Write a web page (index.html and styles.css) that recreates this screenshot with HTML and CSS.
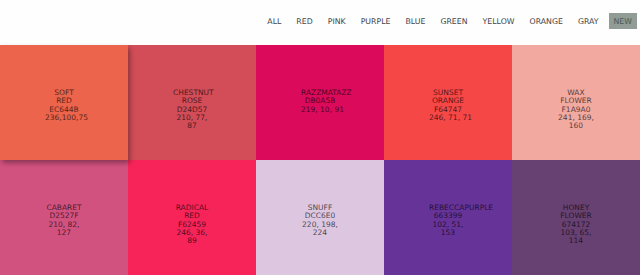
FILE: index.html
```html
<!DOCTYPE html>
<html lang="en">
<head>
    <meta charset="UTF-8">
    <meta name="viewport" content="width=device-width, initial-scale=1.0">
    <title>Flat Colors</title>
    <link rel="stylesheet" href="styles.css">
</head>
<body>
    <header class="topbar">
        <nav class="filters">
            <a href="#">All</a>
            <a href="#">Red</a>
            <a href="#">Pink</a>
            <a href="#">Purple</a>
            <a href="#">Blue</a>
            <a href="#">Green</a>
            <a href="#">Yellow</a>
            <a href="#">Orange</a>
            <a href="#">Gray</a>
            <a href="#" class="active">New</a>
        </nav>
    </header>

    <div class="swatches">
        <div class="swatch hovered" style="background-color: #EC644B;">
            <p>SOFT<br>RED<br>EC644B<br>236,100,75</p>
        </div>
        <div class="swatch" style="background-color: #D24D57;">
            <p>CHESTNUT<br>ROSE<br>D24D57<br>210, 77,<br>87</p>
        </div>
        <div class="swatch" style="background-color: #DB0A5B;">
            <p>RAZZMATAZZ<br>DB0A5B<br>219, 10, 91</p>
        </div>
        <div class="swatch" style="background-color: #F64747;">
            <p>SUNSET<br>ORANGE<br>F64747<br>246, 71, 71</p>
        </div>
        <div class="swatch" style="background-color: #F1A9A0;">
            <p>WAX<br>FLOWER<br>F1A9A0<br>241, 169,<br>160</p>
        </div>
        <div class="swatch" style="background-color: #D2527F;">
            <p>CABARET<br>D2527F<br>210, 82,<br>127</p>
        </div>
        <div class="swatch" style="background-color: #F62459;">
            <p>RADICAL<br>RED<br>F62459<br>246, 36,<br>89</p>
        </div>
        <div class="swatch" style="background-color: #DCC6E0;">
            <p>SNUFF<br>DCC6E0<br>220, 198,<br>224</p>
        </div>
        <div class="swatch" style="background-color: #663399;">
            <p>REBECCAPURPLE<br>663399<br>102, 51,<br>153</p>
        </div>
        <div class="swatch" style="background-color: #674172;">
            <p>HONEY<br>FLOWER<br>674172<br>103, 65,<br>114</p>
        </div>
    </div>
</body>
</html>
```

FILE: styles.css
```css
body {
    margin: 0;
    font-family: "DejaVu Sans", sans-serif;
    background-color: #fff;
    overflow: hidden;
}
.topbar {
    height: 45px;
    display: flex;
    justify-content: flex-end;
    align-items: center;
    padding-right: 3px;
    background-color: #fefefe;
}
.filters {
    display: flex;
    gap: 5px;
    margin-top: -3px;
}
.filters a {
    padding: 4px 5px 3px;
    font-size: 7.8px;
    line-height: 9px;
    text-transform: uppercase;
    text-decoration: none;
    color: #444;
}
.filters a.active {
    background-color: #909c95;
    color: #4c5a53;
}
.swatches {
    display: grid;
    grid-template-columns: repeat(5, 1fr);
    grid-auto-rows: 115px;
}
.swatch {
    position: relative;
    display: flex;
    justify-content: center;
}
.swatch.hovered {
    z-index: 1;
    box-shadow: 2px 3px 5px rgba(0, 0, 0, 0.35);
}
.swatch p {
    width: 38px;
    margin: 0;
    padding-top: 44px;
    font-size: 7.5px;
    line-height: 8.3px;
    text-align: center;
    white-space: nowrap;
    color: rgba(0, 0, 0, 0.68);
}
```
